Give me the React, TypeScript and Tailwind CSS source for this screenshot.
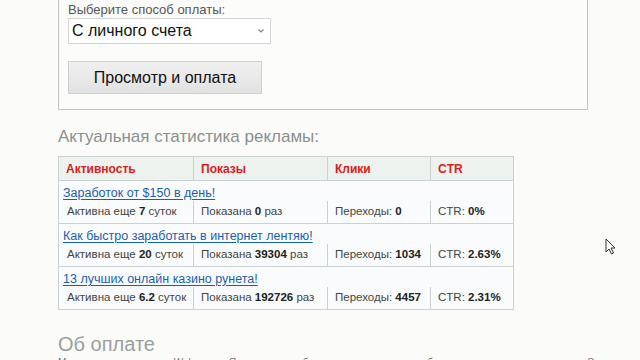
import React from 'react';

interface AdRow {
  title: string;
  days: string;
  shows: string;
  clicks: string;
  ctr: string;
}

const rows: AdRow[] = [
  { title: 'Заработок от $150 в день!', days: '7', shows: '0', clicks: '0', ctr: '0%' },
  { title: 'Как быстро заработать в интернет лентяю!', days: '20', shows: '39304', clicks: '1034', ctr: '2.63%' },
  { title: '13 лучших онлайн казино рунета!', days: '6.2', shows: '192726', clicks: '4457', ctr: '2.31%' },
];

const App: React.FC = () => {
  return (
    <div className="relative w-[640px] h-[360px] overflow-hidden bg-[#fbfcf9] font-['Liberation_Sans',Arial,sans-serif]">
      <div className="pl-[58px] flex flex-col">
        {/* PAYMENT BOX */}
        <div className="w-[530px] h-[110px] border-x border-b border-[#c4c4c4] bg-[#fcfdfb] pl-[9px] pt-[2px]">
          <div className="text-[13px] leading-[15px] text-[#555]">Выберите способ оплаты:</div>
          <div className="mt-[1px] w-[203px] h-[26px] border border-[#d6d6d6] bg-white flex items-center justify-between pl-[3px] pr-[5px]">
            <span className="text-[16px] text-[#111]">С личного счета</span>
            <svg width="8" height="6" viewBox="0 0 8 6" className="text-[#888]">
              <path d="M1.5 1.5 L4 4 L6.5 1.5" fill="none" stroke="currentColor" strokeWidth="1.2" />
            </svg>
          </div>
          <button className="mt-[17px] w-[194px] h-[33px] border border-[#cfcfcf] bg-gradient-to-b from-[#f0f0f0] to-[#e2e2e2] text-[16px] text-[#111] flex items-center justify-center">
            Просмотр и оплата
          </button>
        </div>

        {/* STATS */}
        <div className="mt-[17px] text-[17px] leading-[20px] text-[#8a8f8f]">Актуальная статистика рекламы:</div>
        <table className="mt-[9px] w-[456px] table-fixed border-collapse border border-[#c9d2d2] bg-[#f9fbfc] text-[11.5px] whitespace-nowrap">
          <colgroup>
            <col className="w-[135px]" />
            <col className="w-[134px]" />
            <col className="w-[103px]" />
            <col />
          </colgroup>
          <thead>
            <tr className="bg-[#eef2ee] h-[24px] text-left text-[#dc1c1c] text-[12px]">
              <th className="pl-[7px] border-r border-[#c9d2d2] font-bold">Активность</th>
              <th className="pl-[7px] border-r border-[#c9d2d2] font-bold">Показы</th>
              <th className="pl-[7px] border-r border-[#c9d2d2] font-bold">Клики</th>
              <th className="pl-[7px] font-bold">CTR</th>
            </tr>
          </thead>
          {rows.map(r => (
            <tbody key={r.title} className="border-t border-[#c9d2d2]">
              <tr className="h-[20px]">
                <td colSpan={4} className="pl-[4px] align-bottom leading-[16px]">
                  <a href="#" className="text-[12.5px] leading-[16px] text-[#1a5fb4] underline underline-offset-2">{r.title}</a>
                </td>
              </tr>
              <tr className="h-[23px] text-[#444]">
                <td className="pl-[8px] border-r border-[#c9d2d2]">Активна еще <b className="text-[#222]">{r.days}</b> суток</td>
                <td className="pl-[7px] border-r border-[#c9d2d2]">Показана <b className="text-[#222]">{r.shows}</b> раз</td>
                <td className="pl-[7px] border-r border-[#c9d2d2]">Переходы: <b className="text-[#222]">{r.clicks}</b></td>
                <td className="pl-[7px]">CTR: <b className="text-[#222]">{r.ctr}</b></td>
              </tr>
            </tbody>
          ))}
        </table>

        {/* ABOUT */}
        <div className="mt-[22px] text-[20px] leading-[24px] text-[#9a9e9e]">Об оплате</div>
        <div className="text-[10px] leading-[13px] text-[#777] whitespace-nowrap">
          Мы принимаем к оплате Webmoney, Яндекс-деньги, банковские карты, смс-сообщения, оплату через терминалы Элекснет и еще около
        </div>
      </div>

      {/* mouse cursor */}
      <svg width="12" height="18" viewBox="0 0 12 18" className="absolute left-[605px] top-[238px]">
        <path d="M1 1 L1 14 L4 11 L6.5 16 L8.5 15 L6 10 L10 10 Z" fill="white" stroke="#333" strokeWidth="1" strokeLinejoin="round" />
      </svg>
    </div>
  );
};

export default App;
